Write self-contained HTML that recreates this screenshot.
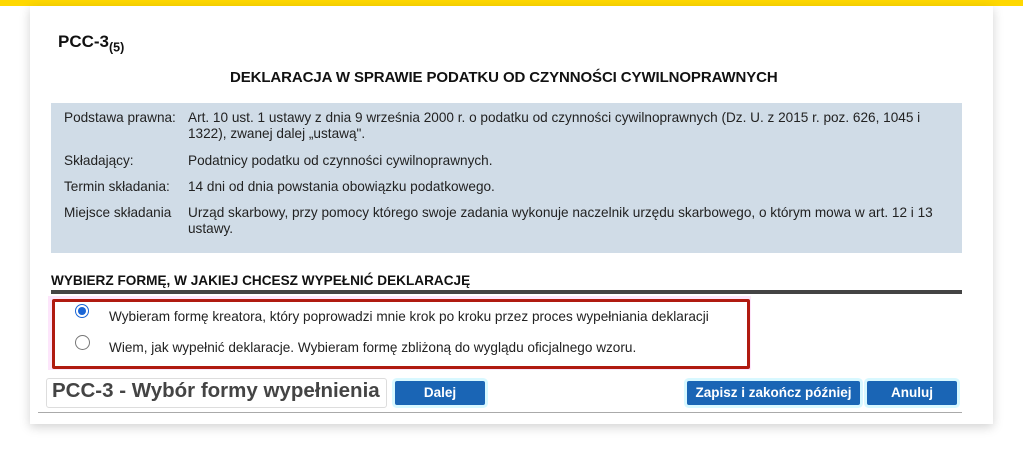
<!DOCTYPE html>
<html><head><meta charset="utf-8"><style>
body{margin:0;width:1023px;height:454px;background:#fff;font-family:"Liberation Sans",Arial,sans-serif;position:relative;overflow:hidden;color:#222}
.a{position:absolute;white-space:nowrap}
#bar{left:0;top:0;width:1023px;height:6px;background:#ffd800}
#card{left:30px;top:6px;width:963px;height:418px;background:#fff;box-shadow:0 3px 10px rgba(0,0,0,.18)}
.t{font-size:13.6px;color:#222}
.btn{background:#1a65b5;color:#fff;font-weight:bold;font-size:13.5px;text-align:center;line-height:24px;height:24px;border-radius:2px;box-shadow:0 0 0 3px #d8f8ff}
</style></head><body>
<div class="a" id="bar"></div>
<div class="a" id="card"></div>
<div class="a" style="left:58px;top:32px;font-size:17px;font-weight:bold;color:#111">PCC-3<sub style="font-size:12.5px">(5)</sub></div>
<div class="a" style="left:230px;top:69px;font-size:15px;font-weight:bold;color:#111;letter-spacing:-0.1px">DEKLARACJA W SPRAWIE PODATKU OD CZYNNOŚCI CYWILNOPRAWNYCH</div>
<div class="a" style="left:51px;top:103px;width:911px;height:150px;background:#d0dce7"></div>
<div class="a t" style="left:64px;top:110px">Podstawa prawna:</div>
<div class="a t" style="left:188px;top:110px;line-height:16px">Art. 10 ust. 1 ustawy z dnia 9 września 2000 r. o podatku od czynności cywilnoprawnych (Dz. U. z 2015 r. poz. 626, 1045 i<br>1322), zwanej dalej „ustawą".</div>
<div class="a t" style="left:64px;top:153px">Składający:</div>
<div class="a t" style="left:188px;top:153px">Podatnicy podatku od czynności cywilnoprawnych.</div>
<div class="a t" style="left:64px;top:179px">Termin składania:</div>
<div class="a t" style="left:188px;top:179px">14 dni od dnia powstania obowiązku podatkowego.</div>
<div class="a t" style="left:64px;top:205px">Miejsce składania</div>
<div class="a t" style="left:188px;top:205px;line-height:16px">Urząd skarbowy, przy pomocy którego swoje zadania wykonuje naczelnik urzędu skarbowego, o którym mowa w art. 12 i 13<br>ustawy.</div>
<div class="a" style="left:51px;top:273px;font-size:13.6px;font-weight:bold;color:#111">WYBIERZ FORMĘ, W JAKIEJ CHCESZ WYPEŁNIĆ DEKLARACJĘ</div>
<div class="a" style="left:51px;top:290px;width:911px;height:4px;background:#444"></div>
<div class="a" style="left:48px;top:296px;width:703px;height:74px;background:#fde6fb"></div>
<div class="a" style="left:52px;top:299px;width:692px;height:64px;background:#fff;border:3px solid #b01a10;border-radius:2px"></div>
<div class="a" style="left:75px;top:304px;width:12px;height:12px;border-radius:50%;border:1px solid #1a65d5;background:#fff"><div style="position:absolute;left:2px;top:2px;width:8px;height:8px;border-radius:50%;background:#1a65d5"></div></div>
<div class="a t" style="left:109px;top:309px">Wybieram formę kreatora, który poprowadzi mnie krok po kroku przez proces wypełniania deklaracji</div>
<div class="a" style="left:75px;top:335px;width:13px;height:13px;border-radius:50%;border:1px solid #777;background:#fff"></div>
<div class="a t" style="left:109px;top:340px">Wiem, jak wypełnić deklaracje. Wybieram formę zbliżoną do wyglądu oficjalnego wzoru.</div>
<div class="a" style="left:46px;top:378px;width:339px;height:28px;border:1px solid #ddd;border-radius:3px;background:#fff"></div>
<div class="a" style="left:52px;top:379px;font-size:20.5px;font-weight:bold;color:#444">PCC-3 - Wybór formy wypełnienia</div>
<div class="a btn" style="left:395px;top:381px;width:90px">Dalej</div>
<div class="a btn" style="left:687px;top:381px;width:173px">Zapisz i zakończ później</div>
<div class="a btn" style="left:867px;top:381px;width:90px">Anuluj</div>
<div class="a" style="left:38px;top:412px;width:924px;height:1px;background:#aaa"></div>
</body></html>
